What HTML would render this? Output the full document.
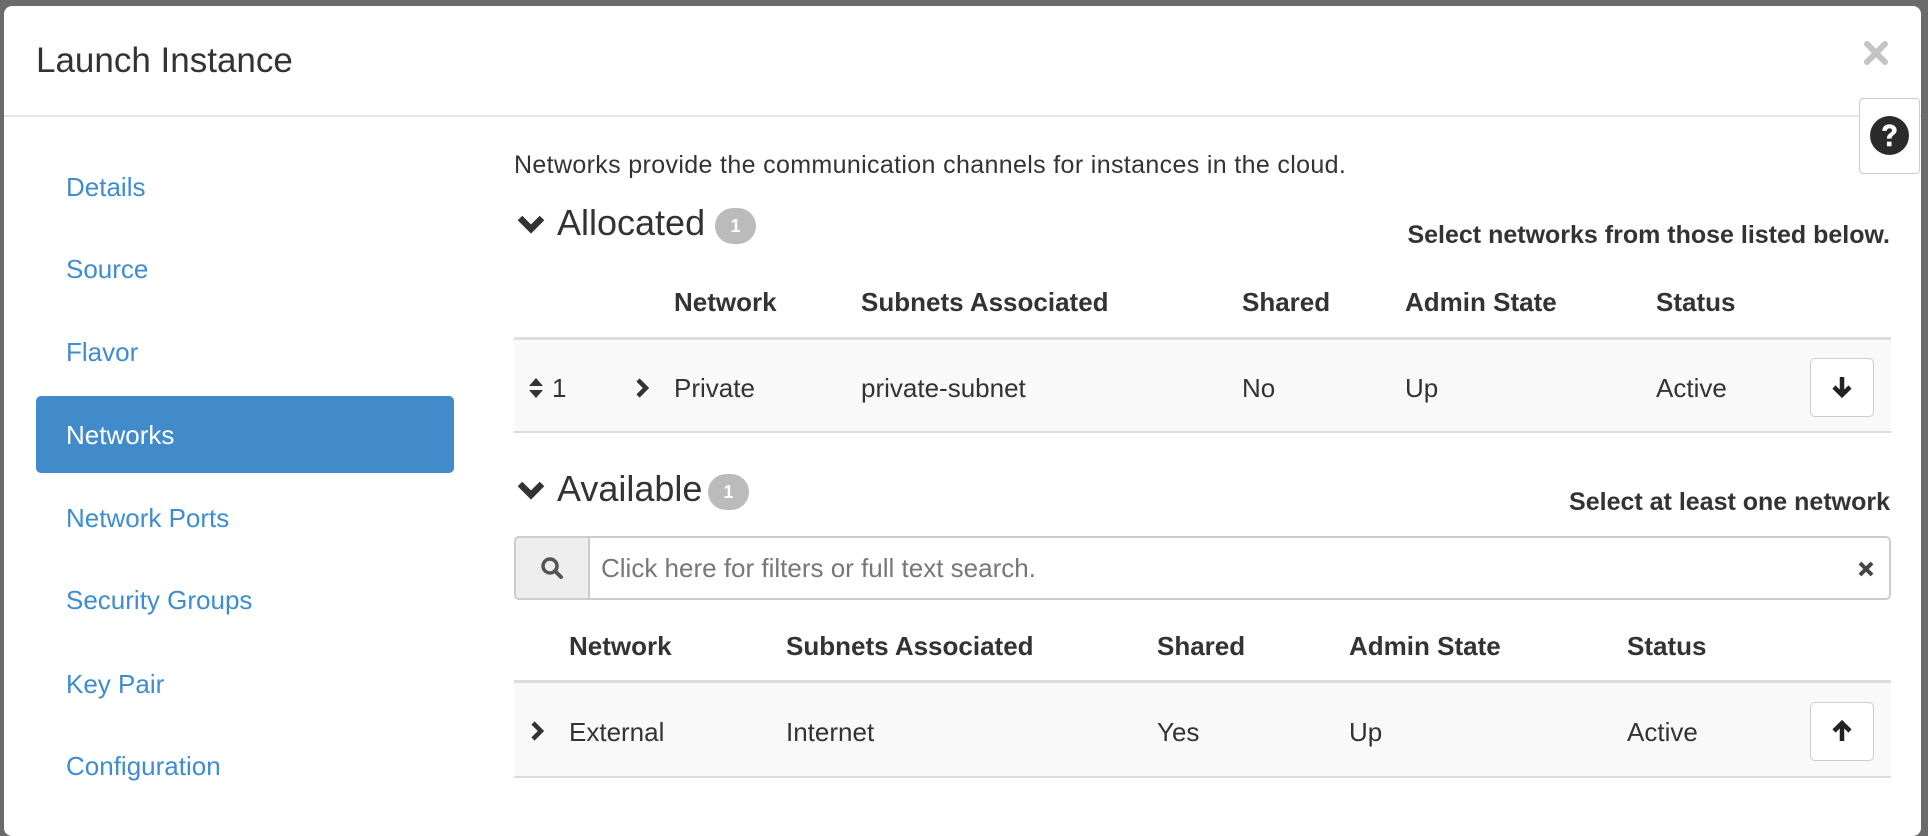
<!DOCTYPE html>
<html><head><meta charset="utf-8"><style>
*{margin:0;padding:0;box-sizing:border-box}
body{width:1928px;height:826px;background:#6b6b6b;position:relative;overflow:hidden;font-family:"Liberation Sans",Helvetica,Arial,sans-serif;color:#333}
.modal{position:absolute;left:4px;top:6px;width:1917px;height:830px;background:#fff;border-radius:8px}
.a{position:absolute;white-space:nowrap;line-height:1}
.nav{position:absolute;left:66px;font-size:26px;color:#3d8dd0;line-height:1}
.h{font-weight:bold;font-size:26px}
.t{font-size:26px}
.btn{position:absolute;width:64px;height:59px;border:1px solid #ccc;border-radius:5px;background:#fff}
.badge{position:absolute;background:#bbb;border-radius:18px;color:#fff;font-weight:bold;font-size:18px;text-align:center}
</style></head><body>
<div class="modal"></div>
<div class="a" style="left:36px;top:43px;font-size:35px;color:#333">Launch Instance</div>
<svg class="a" style="left:1863px;top:40px" width="26" height="26" viewBox="0 0 26 26"><path d="M4 4L22 22M22 4L4 22" stroke="#c4c4c4" stroke-width="6" stroke-linecap="round"/></svg>
<div class="a" style="left:4px;top:115px;width:1917px;height:2px;background:#e5e5e5"></div>
<div class="a" style="left:1859px;top:98px;width:61px;height:76px;border:1px solid #ccc;border-radius:4px;background:#fff"></div>
<svg class="a" style="left:1869px;top:115px" width="41" height="41" viewBox="0 0 40 40"><circle cx="20" cy="20" r="19" fill="#2b2b2b"/><path d="M13 15.5c0-4 3-6.5 7-6.5s7 2.5 7 6c0 4-5 4.5-5 8h-4.5c0-5 5-5.5 5-8 0-1.3-1-2-2.5-2s-2.6 1-2.7 2.5z" fill="#fff"/><rect x="17.5" y="26" width="4.5" height="4.5" fill="#fff"/></svg>

<div class="a" style="left:36px;top:396px;width:418px;height:77px;background:#428bca;border-radius:5px"></div>
<div class="nav" style="top:174px">Details</div>
<div class="nav" style="top:256px">Source</div>
<div class="nav" style="top:339px">Flavor</div>
<div class="nav" style="top:422px;color:#fff">Networks</div>
<div class="nav" style="top:505px">Network Ports</div>
<div class="nav" style="top:587px">Security Groups</div>
<div class="nav" style="top:671px">Key Pair</div>
<div class="nav" style="top:753px">Configuration</div>

<div class="a" style="left:514px;top:153px;font-size:25px;letter-spacing:0.35px">Networks provide the communication channels for instances in the cloud.</div>

<svg class="a" style="left:516px;top:213px" width="30" height="22" viewBox="0 0 30 22"><path d="M4 5L15 16L26 5" fill="none" stroke="#333" stroke-width="6.5"/></svg>
<div class="a" style="left:557px;top:205px;font-size:36px">Allocated</div>
<div class="badge" style="left:715px;top:208px;width:41px;height:36px;line-height:36px">1</div>
<div class="a" style="right:38px;top:223px;font-size:25px;font-weight:bold">Select networks from those listed below.</div>

<div class="a h" style="left:674px;top:289px">Network</div>
<div class="a h" style="left:861px;top:289px">Subnets Associated</div>
<div class="a h" style="left:1242px;top:289px">Shared</div>
<div class="a h" style="left:1405px;top:289px">Admin State</div>
<div class="a h" style="left:1656px;top:289px">Status</div>
<div class="a" style="left:514px;top:337px;width:1377px;height:3px;background:#ddd"></div>
<div class="a" style="left:514px;top:340px;width:1377px;height:93px;background:#f9f9f9;border-bottom:2px solid #ddd"></div>
<svg class="a" style="left:528px;top:376px" width="16" height="24" viewBox="0 0 16 24"><path d="M1 10L8 2L15 10zM1 14L8 22L15 14z" fill="#333"/></svg>
<div class="a t" style="left:552px;top:375px">1</div>
<svg class="a" style="left:634px;top:377px" width="16" height="22" viewBox="0 0 16 22"><path d="M4 3L12 11L4 19" fill="none" stroke="#333" stroke-width="4.5"/></svg>
<div class="a t" style="left:674px;top:375px">Private</div>
<div class="a t" style="left:861px;top:375px">private-subnet</div>
<div class="a t" style="left:1242px;top:375px">No</div>
<div class="a t" style="left:1405px;top:375px">Up</div>
<div class="a t" style="left:1656px;top:375px">Active</div>
<div class="btn" style="left:1810px;top:358px"></div>
<svg class="a" style="left:1831px;top:375px" width="22" height="24" viewBox="0 0 22 24"><path d="M11 2V19M3 12L11 20L19 12" fill="none" stroke="#222" stroke-width="4.5"/></svg>

<svg class="a" style="left:516px;top:479px" width="30" height="22" viewBox="0 0 30 22"><path d="M4 5L15 16L26 5" fill="none" stroke="#333" stroke-width="6.5"/></svg>
<div class="a" style="left:557px;top:471px;font-size:36px">Available</div>
<div class="badge" style="left:708px;top:474px;width:41px;height:36px;line-height:36px">1</div>
<div class="a" style="right:38px;top:490px;font-size:25px;font-weight:bold">Select at least one network</div>

<div class="a" style="left:514px;top:536px;width:1377px;height:64px;border:2px solid #ccc;border-radius:5px;background:#fff"></div>
<div class="a" style="left:516px;top:538px;width:74px;height:60px;background:#eee;border-right:2px solid #ccc;border-radius:3px 0 0 3px"></div>
<svg class="a" style="left:540px;top:556px" width="24" height="24" viewBox="0 0 24 24"><circle cx="10" cy="10" r="7" fill="none" stroke="#555" stroke-width="3.5"/><path d="M15 15L21 21" stroke="#555" stroke-width="4" stroke-linecap="round"/></svg>
<div class="a" style="left:601px;top:555px;font-size:26px;color:#777">Click here for filters or full text search.</div>
<svg class="a" style="left:1857px;top:560px" width="18" height="18" viewBox="0 0 18 18"><path d="M3 3L15 15M15 3L3 15" stroke="#444" stroke-width="4"/></svg>

<div class="a h" style="left:569px;top:633px">Network</div>
<div class="a h" style="left:786px;top:633px">Subnets Associated</div>
<div class="a h" style="left:1157px;top:633px">Shared</div>
<div class="a h" style="left:1349px;top:633px">Admin State</div>
<div class="a h" style="left:1627px;top:633px">Status</div>
<div class="a" style="left:514px;top:680px;width:1377px;height:3px;background:#ddd"></div>
<div class="a" style="left:514px;top:683px;width:1377px;height:95px;background:#f9f9f9;border-bottom:2px solid #ddd"></div>
<svg class="a" style="left:529px;top:720px" width="16" height="22" viewBox="0 0 16 22"><path d="M4 3L12 11L4 19" fill="none" stroke="#333" stroke-width="4.5"/></svg>
<div class="a t" style="left:569px;top:719px">External</div>
<div class="a t" style="left:786px;top:719px">Internet</div>
<div class="a t" style="left:1157px;top:719px">Yes</div>
<div class="a t" style="left:1349px;top:719px">Up</div>
<div class="a t" style="left:1627px;top:719px">Active</div>
<div class="btn" style="left:1810px;top:702px"></div>
<svg class="a" style="left:1831px;top:719px" width="22" height="24" viewBox="0 0 22 24"><path d="M11 22V5M3 12L11 4L19 12" fill="none" stroke="#222" stroke-width="4.5"/></svg>
</body></html>
